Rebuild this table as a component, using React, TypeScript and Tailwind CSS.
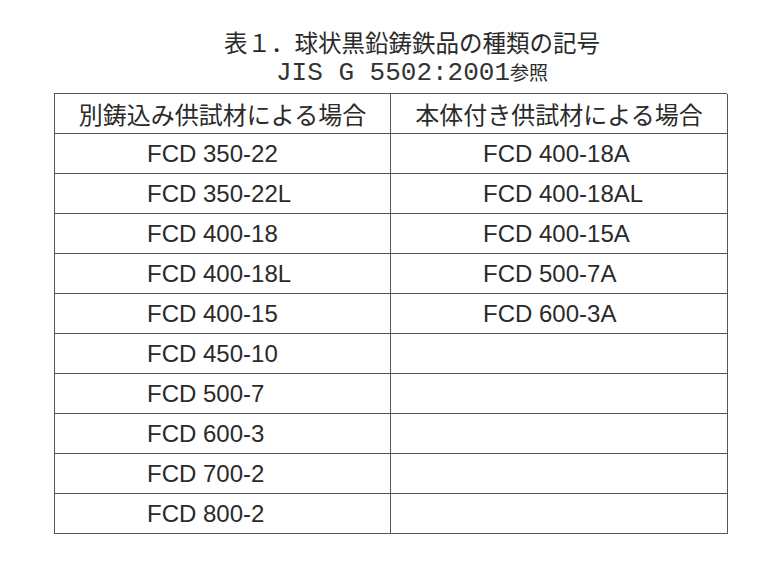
import React from "react";

const left = [
  "FCD 350-22",
  "FCD 350-22L",
  "FCD 400-18",
  "FCD 400-18L",
  "FCD 400-15",
  "FCD 450-10",
  "FCD 500-7",
  "FCD 600-3",
  "FCD 700-2",
  "FCD 800-2",
];
const right = ["FCD 400-18A", "FCD 400-18AL", "FCD 400-15A", "FCD 500-7A", "FCD 600-3A", "", "", "", "", ""];

export default function App() {
  return (
    <div className="w-[768px] h-[570px] bg-white text-[#2a2a2a] overflow-hidden">
      <div className="pt-[27px] pl-[56px]">
        <div className="h-[30px] leading-[30px] text-center text-[23.5px] font-['Noto_Sans_CJK_JP',sans-serif]">
          表１．球状黒鉛鋳鉄品の種類の記号
        </div>
        <div className="h-[30px] leading-[30px] text-center">
          <span className="text-[26px] font-['Liberation_Mono',monospace] text-[#333]">JIS G 5502:2001</span>
          <span className="text-[19px] font-['Noto_Sans_CJK_JP',sans-serif]">参照</span>
        </div>
      </div>
      <div className="mt-[6px] ml-[54px] w-[673px]">
        <div className="grid grid-cols-[336px_337px] border-t border-l border-[#555]">
          <div className="h-[40px] border-r border-b border-[#555] flex items-center justify-center text-[24px] font-['Noto_Sans_CJK_JP',sans-serif]">
            別鋳込み供試材による場合
          </div>
          <div className="h-[40px] border-r border-b border-[#555] flex items-center justify-center text-[24px] font-['Noto_Sans_CJK_JP',sans-serif]">
            本体付き供試材による場合
          </div>
          {left.map((l, i) => (
            <React.Fragment key={i}>
              <div className="h-[40px] border-r border-b border-[#555] flex items-center pl-[92px] text-[24px] font-['Liberation_Sans',sans-serif]">
                {l}
              </div>
              <div className="h-[40px] border-r border-b border-[#555] flex items-center pl-[92px] text-[24px] font-['Liberation_Sans',sans-serif]">
                {right[i]}
              </div>
            </React.Fragment>
          ))}
        </div>
      </div>
    </div>
  );
}
